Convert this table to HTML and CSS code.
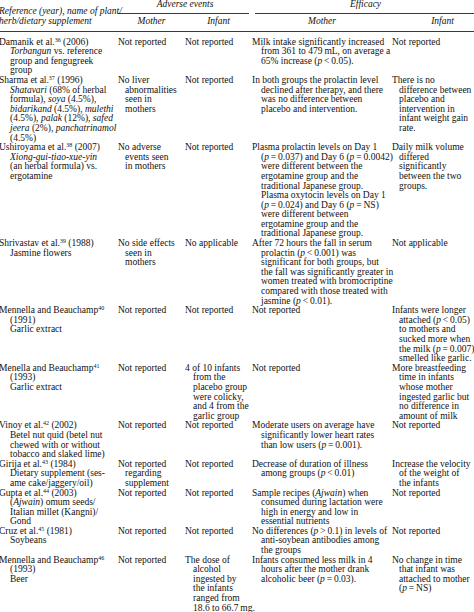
FILE: index.html
```html
<!DOCTYPE html>
<html>
<head>
<meta charset="utf-8">
<link rel="stylesheet" href="styles.css">
</head>
<body>
<table class="tbl">
<colgroup>
<col class="w1"><col class="w2"><col class="w3"><col class="w4"><col class="w5">
</colgroup>
<thead>
<tr class="h1">
<th rowspan="2" class="ref">Reference (year), name of plant/<br>herb/dietary supplement</th>
<th colspan="2" class="grp grp-a"><div class="grp-label">Adverse events</div><div class="grp-rule"></div></th>
<th colspan="2" class="grp grp-e"><div class="grp-label">Efficacy</div><div class="grp-rule"></div></th>
</tr>
<tr class="h2">
<th>Mother</th><th>Infant</th><th>Mother</th><th>Infant</th>
</tr>
</thead>
<tbody>
<tr class="first">
<td class="c1">Damanik et al.<sup>36</sup> (2006)<br><i>Torbangun</i> vs. reference<br>group and fengugreek<br>group</td>
<td class="c2">Not reported</td>
<td class="c3">Not reported</td>
<td class="c4">Milk intake significantly increased<br>from 361 to 479&thinsp;mL, on average a<br>65% increase (<i>p</i>&thinsp;&lt;&thinsp;0.05).</td>
<td class="c5">Not reported</td>
</tr>
<tr>
<td class="c1">Sharma et al.<sup>37</sup> (1996)<br><i>Shatavari</i> (68% of herbal<br>formula), <i>soya</i> (4.5%),<br><i>bidarikand</i> (4.5%), <i>mulethi</i><br>(4.5%), <i>palak</i> (12%), <i>safed</i><br><i>jeera</i> (2%), <i>panchatrinamol</i><br>(4.5%)</td>
<td class="c2">No liver<br>abnormalities<br>seen in<br>mothers</td>
<td class="c3">Not reported</td>
<td class="c4">In both groups the prolactin level<br>declined after therapy, and there<br>was no difference between<br>placebo and intervention.</td>
<td class="c5">There is no<br>difference between<br>placebo and<br>intervention in<br>infant weight gain<br>rate.</td>
</tr>
<tr>
<td class="c1">Ushiroyama et al.<sup>38</sup> (2007)<br><i>Xiong-gui-tiao-xue-yin</i><br>(an herbal formula) vs.<br>ergotamine</td>
<td class="c2">No adverse<br>events seen<br>in mothers</td>
<td class="c3">Not reported</td>
<td class="c4">Plasma prolactin levels on Day 1<br>(<i>p</i>&thinsp;=&thinsp;0.037) and Day 6 (<i>p</i>&thinsp;=&thinsp;0.0042)<br>were different between the<br>ergotamine group and the<br>traditional Japanese group.<br>Plasma oxytocin levels on Day 1<br>(<i>p</i>&thinsp;=&thinsp;0.024) and Day 6 (<i>p</i>&thinsp;=&thinsp;NS)<br>were different between<br>ergotamine group and the<br>traditional Japanese group.</td>
<td class="c5">Daily milk volume<br>differed<br>significantly<br>between the two<br>groups.</td>
</tr>
<tr>
<td class="c1">Shrivastav et al.<sup>39</sup> (1988)<br>Jasmine flowers</td>
<td class="c2">No side effects<br>seen in<br>mothers</td>
<td class="c3">No applicable</td>
<td class="c4">After 72 hours the fall in serum<br>prolactin (<i>p</i>&thinsp;&lt;&thinsp;0.001) was<br>significant for both groups, but<br>the fall was significantly greater in<br>women treated with bromocriptine<br>compared with those treated with<br>jasmine (<i>p</i>&thinsp;&lt;&thinsp;0.01).</td>
<td class="c5">Not applicable</td>
</tr>
<tr>
<td class="c1">Mennella and Beauchamp<sup>40</sup><br>(1991)<br>Garlic extract</td>
<td class="c2">Not reported</td>
<td class="c3">Not reported</td>
<td class="c4">Not reported</td>
<td class="c5">Infants were longer<br>attached (<i>p</i>&thinsp;&lt;&thinsp;0.05)<br>to mothers and<br>sucked more when<br>the milk (<i>p</i>&thinsp;=&thinsp;0.007)<br>smelled like garlic.</td>
</tr>
<tr>
<td class="c1">Menella and Beauchamp<sup>41</sup><br>(1993)<br>Garlic extract</td>
<td class="c2">Not reported</td>
<td class="c3">4 of 10 infants<br>from the<br>placebo group<br>were colicky,<br>and 4 from the<br>garlic group</td>
<td class="c4">Not reported</td>
<td class="c5">More breastfeeding<br>time in infants<br>whose mother<br>ingested garlic but<br>no difference in<br>amount of milk</td>
</tr>
<tr>
<td class="c1">Vinoy et al.<sup>42</sup> (2002)<br>Betel nut quid (betel nut<br>chewed with or without<br>tobacco and slaked lime)</td>
<td class="c2">Not reported</td>
<td class="c3">Not reported</td>
<td class="c4">Moderate users on average have<br>significantly lower heart rates<br>than low users (<i>p</i>&thinsp;=&thinsp;0.001).</td>
<td class="c5">Not reported</td>
</tr>
<tr>
<td class="c1">Girija et al.<sup>43</sup> (1984)<br>Dietary supplement (ses-<br>ame cake/jaggery/oil)</td>
<td class="c2">Not reported<br>regarding<br>supplement</td>
<td class="c3">Not reported</td>
<td class="c4">Decrease of duration of illness<br>among groups (<i>p</i>&thinsp;&lt;&thinsp;0.01)</td>
<td class="c5">Increase the velocity<br>of the weight of<br>the infants</td>
</tr>
<tr>
<td class="c1">Gupta et al.<sup>44</sup> (2003)<br>(<i>Ajwain</i>) omum seeds/<br>Italian millet (Kangni)/<br>Gond</td>
<td class="c2">Not reported</td>
<td class="c3">Not reported</td>
<td class="c4">Sample recipes (<i>Ajwain</i>) when<br>consumed during lactation were<br>high in energy and low in<br>essential nutrients</td>
<td class="c5">Not reported</td>
</tr>
<tr>
<td class="c1">Cruz et al.<sup>45</sup> (1981)<br>Soybeans</td>
<td class="c2">Not reported</td>
<td class="c3">Not reported</td>
<td class="c4">No differences (<i>p</i>&thinsp;&gt;&thinsp;0.1) in levels of<br>anti-soybean antibodies among<br>the groups</td>
<td class="c5">Not reported</td>
</tr>
<tr>
<td class="c1">Mennella and Beauchamp<sup>46</sup><br>(1993)<br>Beer</td>
<td class="c2">Not reported</td>
<td class="c3">The dose of<br>alcohol<br>ingested by<br>the infants<br>ranged from<br>18.6 to 66.7&thinsp;mg.</td>
<td class="c4">Infants consumed less milk in 4<br>hours after the mother drank<br>alcoholic beer (<i>p</i>&thinsp;=&thinsp;0.03).</td>
<td class="c5">No change in time<br>that infant was<br>attached to mother<br>(<i>p</i>&thinsp;=&thinsp;NS)</td>
</tr>
</tbody>
</table>
</body>
</html>
```
FILE: styles.css
```css
html, body {
  margin: 0;
  padding: 0;
  background: #ffffff;
}
body {
  width: 474px;
  height: 612px;
  overflow: hidden;
}
.tbl {
  border-collapse: collapse;
  table-layout: fixed;
  width: 494px;
  margin-left: -1px;
  font-family: "Liberation Serif", "Times New Roman", serif;
  font-size: 9.5px;
  line-height: 9.6px;
  color: #111111;
}
.w1 { width: 119px; }
.w2 { width: 67px; }
.w3 { width: 67px; }
.w4 { width: 140px; }
.w5 { width: 101px; }

.tbl th {
  font-weight: normal;
  font-style: italic;
  padding: 0;
  white-space: nowrap;
}
.h1 th.grp {
  vertical-align: top;
  text-align: center;
}
.grp-label {
  height: 13px;
}
.grp-rule {
  border-top: 1px solid #3a3a3a;
}
.grp-a .grp-rule { margin-right: 3px; }
.grp-e .grp-rule { margin-left: 3px; }
.grp-e .grp-label { padding-right: 14px; }

.ref {
  text-align: left;
  vertical-align: bottom;
  padding-bottom: 4px !important;
  border-bottom: 1px solid #3a3a3a;
}
.h2 th {
  text-align: center;
  padding-top: 3px;
  padding-bottom: 4px;
  border-bottom: 1px solid #3a3a3a;
}
.tbl td {
  padding: 0;
  vertical-align: top;
  text-align: left;
  white-space: nowrap;
}
.first td {
  padding-top: 6px;
}
.c1 { padding-left: 11px !important; text-indent: -11px; }
.c2 { padding-left: 7px !important; text-indent: -7px; }
.c3 { padding-left: 8px !important; text-indent: -8px; }
.c4 { padding-left: 9px !important; text-indent: -9px; }
.c5 { padding-left: 7px !important; text-indent: -7px; }

sup {
  font-size: 6px;
  line-height: 0;
  vertical-align: 3.5px;
}
```
